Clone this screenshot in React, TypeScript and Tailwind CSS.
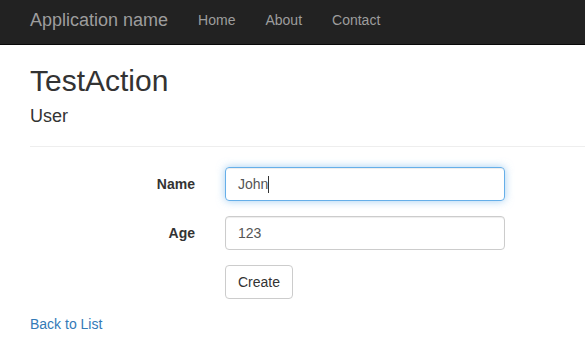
export default function App() {
  const font = { fontFamily: '"Liberation Sans", Arial, Helvetica, sans-serif' };
  return (
    <div className="min-h-[352px] bg-white text-[14px] text-[#333] overflow-hidden" style={font}>
      <div className="h-[45px] bg-[#222] border-b border-[#080808] flex items-center pl-[30px] pb-[4px]">
        <span className="text-[18px] text-[#9d9d9d] leading-[20px]">Application name</span>
        <nav className="flex ml-[15px]">
          <a className="px-[15px] text-[#9d9d9d] text-[14px] leading-[20px]">Home</a>
          <a className="px-[15px] text-[#9d9d9d] text-[14px] leading-[20px]">About</a>
          <a className="px-[15px] text-[#9d9d9d] text-[14px] leading-[20px]">Contact</a>
        </nav>
      </div>
      <div className="pl-[30px]">
        <h2 className="text-[30px] leading-[33px] mt-[19px] font-normal">TestAction</h2>
        <h4 className="text-[18px] leading-[20px] mt-[9px] font-normal">User</h4>
        <hr className="mt-[20px] border-t border-[#eee] mr-[-30px]" />
        <form className="mt-[20px]">
          <div className="flex items-start mb-[15px]">
            <label className="w-[165px] text-right font-bold pt-[7px] leading-[20px]">Name</label>
            <div className="ml-[30px]">
              <div className="w-[280px] h-[34px] rounded-[4px] border border-[#66afe9] px-[12px] py-[6px] leading-[20px] text-[#555] shadow-[inset_0_1px_1px_rgba(0,0,0,0.075),0_0_8px_rgba(102,175,233,0.6)] flex items-center">
                <span>John</span>
                <span className="inline-block w-[1px] h-[17px] bg-[#333]"></span>
              </div>
            </div>
          </div>
          <div className="flex items-start mb-[15px]">
            <label className="w-[165px] text-right font-bold pt-[7px] leading-[20px]">Age</label>
            <div className="ml-[30px]">
              <div className="w-[280px] h-[34px] rounded-[4px] border border-[#ccc] px-[12px] py-[6px] leading-[20px] text-[#555] shadow-[inset_0_1px_1px_rgba(0,0,0,0.075)]">
                123
              </div>
            </div>
          </div>
          <div className="flex mb-[15px]">
            <div className="ml-[195px]">
              <button type="button" className="h-[34px] px-[12px] rounded-[4px] border border-[#ccc] bg-white text-[#333] leading-[20px]">
                Create
              </button>
            </div>
          </div>
        </form>
        <div className="mt-[10px]">
          <a className="text-[#337ab7] leading-[20px]">Back to List</a>
        </div>
      </div>
    </div>
  );
}
